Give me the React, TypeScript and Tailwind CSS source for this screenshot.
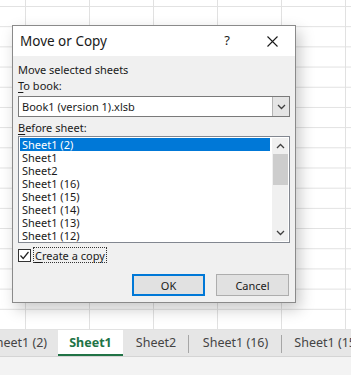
const items = [
  'Sheet1 (2)',
  'Sheet1',
  'Sheet2',
  'Sheet1 (16)',
  'Sheet1 (15)',
  'Sheet1 (14)',
  'Sheet1 (13)',
  'Sheet1 (12)',
];

const Chevron = ({ up }: { up?: boolean }) => (
  <svg width="9" height="6" viewBox="0 0 9 6" className="block">
    <path
      d={up ? 'M1 5 L4.5 1.5 L8 5' : 'M1 1 L4.5 4.5 L8 1'}
      fill="none"
      stroke="#404040"
      strokeWidth="1.3"
    />
  </svg>
);

const Dialog = () => (
  <div className="absolute left-[12px] top-[25px] w-[284px] h-[278px] border border-[#8a8a8a] bg-[#f0f0f0] shadow-[4px_6px_14px_rgba(0,0,0,0.22)] flex flex-col">
    {/* Title bar */}
    <div className="h-[30px] bg-white flex items-center pl-[7px] shrink-0">
      <span className="text-[13.5px] text-[#1a1a1a]">Move or Copy</span>
      <span className="ml-auto mr-[37px] text-[13px] text-[#1a1a1a]">?</span>
      <svg width="11" height="11" viewBox="0 0 11 11" className="mr-[17px]">
        <path d="M0.5 0.5 L10.5 10.5 M10.5 0.5 L0.5 10.5" stroke="#1a1a1a" strokeWidth="1.1" />
      </svg>
    </div>

    {/* Body */}
    <div className="flex flex-col px-[5px] pt-[6px] text-[11px] text-[#1a1a1a] leading-[15px]">
      <div>Move selected sheets</div>
      <div className="mt-[1px]">
        <span className="underline underline-offset-2">T</span>o book:
      </div>
      <div className="mt-[3px] h-[21px] w-[272px] border border-[#7a7a7a] bg-white flex items-center">
        <span className="pl-[3px]">Book1 (version 1).xlsb</span>
        <div className="ml-auto h-full w-[17px] bg-[#e5e5e5] border-l border-[#b5b5b5] flex items-center justify-center">
          <Chevron />
        </div>
      </div>
      <div className="mt-[3px]">
        <span className="underline underline-offset-2">B</span>efore sheet:
      </div>
      <div className="mt-[1px] h-[107px] w-[272px] border border-[#828790] bg-white flex p-[1px]">
        <div className="flex-1 flex flex-col">
          {items.map((t, i) => (
            <div
              key={t}
              className={
                i === 0
                  ? 'h-[13px] leading-[13px] pl-[2px] bg-[#0078d7] text-white'
                  : 'h-[13px] leading-[13px] pl-[2px]'
              }
            >
              {t}
            </div>
          ))}
        </div>
        <div className="w-[16px] ml-[2px] bg-[#f0f0f0] flex flex-col items-center">
          <div className="h-[16px] flex items-center justify-center">
            <Chevron up />
          </div>
          <div className="h-[31px] w-[15px] bg-[#cdcdcd]" />
          <div className="mt-auto h-[16px] flex items-center justify-center">
            <Chevron />
          </div>
        </div>
      </div>

      <div className="mt-[4px] h-[16px] flex items-center">
        <div className="w-[13px] h-[13px] border border-[#333] bg-white flex items-center justify-center">
          <svg width="11" height="11" viewBox="0 0 11 11">
            <path d="M1.5 5.5 L4.2 8.5 L9.5 2" fill="none" stroke="#222" strokeWidth="1.2" />
          </svg>
        </div>
        <div className="ml-[2px] px-[1px] h-[16px] border border-dotted border-[#333] flex items-center">
          <span className="underline underline-offset-2">C</span>reate a copy
        </div>
      </div>

      <div className="mt-[11px] flex justify-end gap-[11px] pr-[1px]">
        <button className="w-[73px] h-[22px] bg-[#e1e1e1] border-2 border-[#0078d7] text-[11px] text-[#1a1a1a]">
          OK
        </button>
        <button className="w-[73px] h-[22px] bg-[#e1e1e1] border border-[#adadad] text-[11px] text-[#1a1a1a]">
          Cancel
        </button>
      </div>
    </div>
  </div>
);

const Tab = ({ label, w, active, sep }: { label: string; w: number; active?: boolean; sep?: boolean }) => (
  <div className="relative h-full shrink-0 flex items-center justify-center" style={{ width: w }}>
    {active ? (
      <div className="absolute inset-0 bg-white border-b-2 border-[#217346]" />
    ) : null}
    <span
      className={
        active
          ? 'relative text-[12.5px] font-bold text-[#217346]'
          : 'relative text-[12.5px] text-[#444]'
      }
    >
      {label}
    </span>
    {sep ? <div className="absolute right-0 top-[5px] w-px h-[18px] bg-[#a6a6a6]" /> : null}
  </div>
);

export default function App() {
  return (
    <div
      className="w-[351px] h-[375px] overflow-hidden relative bg-white flex flex-col"
      style={{ fontFamily: '"Noto Sans", "Open Sans", sans-serif' }}
    >
      {/* Worksheet grid */}
      <div className="h-[330px] shrink-0 bg-white bg-[linear-gradient(to_right,#e1e1e1_1px,transparent_1px),linear-gradient(to_bottom,#e1e1e1_1px,transparent_1px)] bg-[length:64px_20.2px] bg-[position:25px_6px]" />

      {/* Sheet tabs */}
      <div className="h-[27px] shrink-0 bg-[#e6e6e6] flex items-stretch border-b border-[#d4d4d4]">
        <div className="ml-[-22px] flex h-full">
          <Tab label="Sheet1 (2)" w={80} />
          <Tab label="Sheet1" w={65} active />
          <Tab label="Sheet2" w={66} sep />
          <Tab label="Sheet1 (16)" w={93} sep />
          <Tab label="Sheet1 (15)" w={90} />
        </div>
      </div>
      <div className="flex-1 bg-[#f3f3f3]" />

      <Dialog />
    </div>
  );
}
